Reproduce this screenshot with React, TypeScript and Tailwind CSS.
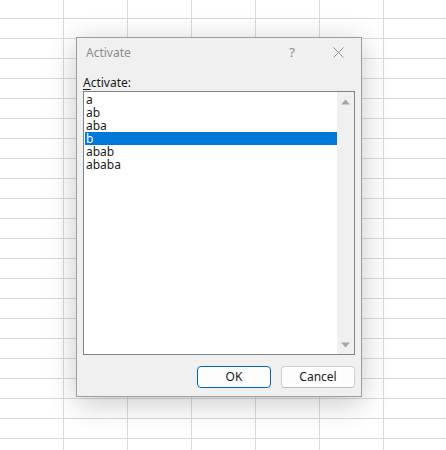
import React from "react";

const ITEMS = ["a", "ab", "aba", "b", "abab", "ababa"];
const SELECTED = 3;

function SheetGrid() {
    // Excel-style gridlines behind the dialog
    const cells = Array.from({ length: 7 * 24 });
    return (
        <div className="-mt-px grid grid-cols-[repeat(7,64px)]">
            {cells.map((_, i) => (
                <div key={i} className="h-[20px] border-r border-b border-[#dadada]" />
            ))}
        </div>
    );
}

function Arrow({ up }: { up?: boolean }) {
    return (
        <svg width="9" height="6" viewBox="0 0 9 6" aria-hidden>
            <path d={up ? "M0 5.5 L4.5 0.5 L9 5.5 Z" : "M0 0.5 L4.5 5.5 L9 0.5 Z"} fill="#a6a6a6" />
        </svg>
    );
}

export default function App() {
    return (
        <div
            className="relative h-[450px] w-[446px] overflow-hidden bg-white text-[12px] text-[#1a1a1a]"
            style={{ fontFamily: '"Segoe UI", "Noto Sans", sans-serif' }}
        >
            <SheetGrid />

            <div className="absolute top-[37px] left-[76px] flex h-[360px] w-[286px] flex-col border border-[#9d9d9d] bg-[#f0f0f0] shadow-[0_6px_28px_rgba(0,0,0,0.22)]">
                {/* Title bar */}
                <div className="flex h-[29px] items-center pl-[9px] text-[#8c8c8c]">
                    <span className="flex-1">Activate</span>
                    <span className="mr-[38px] text-[13px]">?</span>
                    <svg width="11" height="11" viewBox="0 0 11 11" className="mr-[17px]" aria-hidden>
                        <path d="M0.5 0.5 L10.5 10.5 M10.5 0.5 L0.5 10.5" stroke="#8c8c8c" strokeWidth="1" />
                    </svg>
                </div>

                <div className="flex flex-1 flex-col px-[6px]">
                    <div className="mt-[8px] mb-px h-[15px] leading-[15px]">
                        <u className="underline-offset-2">A</u>ctivate:
                    </div>

                    {/* List box */}
                    <div className="flex h-[264px] border border-[#828282] bg-white">
                        <div className="flex flex-1 flex-col pt-px pl-px">
                            {ITEMS.map((item, i) => (
                                <div
                                    key={item}
                                    className={
                                        i === SELECTED
                                            ? "h-[13px] bg-[#0078d7] pl-px leading-[13px] text-white"
                                            : "h-[13px] pl-px leading-[13px]"
                                    }
                                >
                                    {item}
                                </div>
                            ))}
                        </div>
                        <div className="flex w-[17px] flex-col items-center justify-between bg-[#f0f0f0] pt-[7px] pb-[6px]">
                            <Arrow up />
                            <Arrow />
                        </div>
                    </div>

                    {/* Buttons */}
                    <div className="mt-[11px] flex justify-end gap-[10px]">
                        <button className="h-[22px] w-[74px] rounded-[4px] border border-[#0067c0] bg-[#fdfdfd] text-[12px] text-[#1a1a1a]">
                            OK
                        </button>
                        <button className="h-[22px] w-[74px] rounded-[4px] border border-[#d0d0d0] border-b-[#bcbcbc] bg-[#fdfdfd] text-[12px] text-[#1a1a1a]">
                            Cancel
                        </button>
                    </div>
                </div>
            </div>
        </div>
    );
}
